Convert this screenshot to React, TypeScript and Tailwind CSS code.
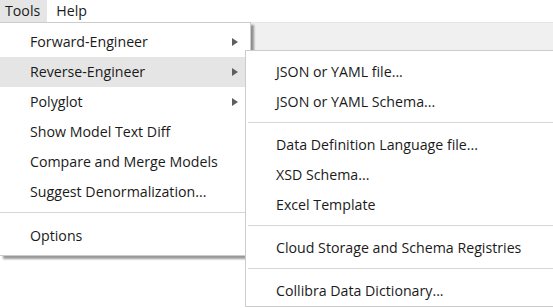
import React from "react";

type Entry = { label: string; sub?: boolean; active?: boolean } | "sep";

const toolsMenu: Entry[] = [
  { label: "Forward-Engineer", sub: true },
  { label: "Reverse-Engineer", sub: true, active: true },
  { label: "Polyglot", sub: true },
  { label: "Show Model Text Diff" },
  { label: "Compare and Merge Models" },
  { label: "Suggest Denormalization..." },
  "sep",
  { label: "Options" },
];

const reverseMenu: Entry[] = [
  { label: "JSON or YAML file..." },
  { label: "JSON or YAML Schema..." },
  "sep",
  { label: "Data Definition Language file..." },
  { label: "XSD Schema..." },
  { label: "Excel Template" },
  "sep",
  { label: "Cloud Storage and Schema Registries" },
  "sep",
  { label: "Collibra Data Dictionary..." },
];

function Arrow() {
  return (
    <svg width="6" height="8" viewBox="0 0 6 8" className="shrink-0">
      <path d="M0 0 L6 4 L0 8 Z" fill="#5f5f5f" />
    </svg>
  );
}

function MenuRows({ items, sepClass }: { items: Entry[]; sepClass: string }) {
  return (
    <>
      {items.map((it, i) =>
        it === "sep" ? (
          <div key={i} className={sepClass}>
            <div className="h-px bg-[#d7d7d7]" />
          </div>
        ) : (
          <div
            key={i}
            className={`flex h-[30px] items-center pl-[30px] pr-[12px] ${it.active ? "bg-[#e5e5e5]" : ""}`}
          >
            <span className="flex-1 whitespace-nowrap">{it.label}</span>
            {it.sub && <Arrow />}
          </div>
        )
      )}
    </>
  );
}

export default function App() {
  return (
    <div
      className="relative h-[308px] w-[553px] overflow-hidden bg-white text-[14.2px] text-[#1a1a1a]"
      style={{ fontFamily: '"Open Sans", "Noto Sans", sans-serif' }}
    >
      <div className="flex h-[22px] items-stretch bg-white">
        <div className="flex items-center bg-[#e5e5e5] px-[5px] pr-[7px]">Tools</div>
        <div className="flex items-center px-[9px]">Help</div>
      </div>
      <div className="h-[60px] border-t border-[#e6e6e6] bg-[#f0f0f0]" />

      <div className="absolute left-0 top-[22px] w-[251px] border border-l-0 border-[#cccccc] bg-white pb-[4px] pt-[4px] shadow-[3px_3px_2px_rgba(0,0,0,0.4)]">
        <MenuRows items={toolsMenu} sepClass="pb-[8px] pl-0 pr-[4px] pt-[5px]" />
      </div>

      <div className="absolute left-[245px] top-[50px] w-[330px] border border-[#cccccc] bg-white pt-[6px]">
        <MenuRows items={reverseMenu} sepClass="pb-[7px] pl-[2px] pt-[5px]" />
      </div>
    </div>
  );
}
